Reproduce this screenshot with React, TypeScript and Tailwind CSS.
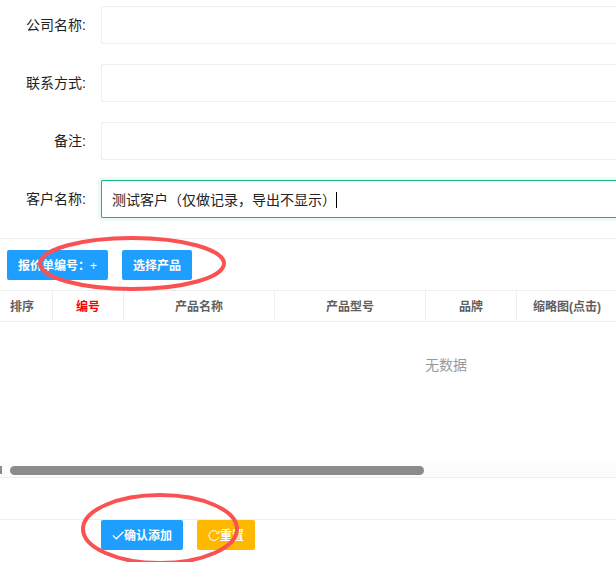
import React from "react";

type Field = { id: string; label: string; value?: string; active?: boolean };

const fields: Field[] = [
  { id: "company", label: "公司名称:" },
  { id: "contact", label: "联系方式:" },
  { id: "remark", label: "备注:" },
  { id: "customer", label: "客户名称:", value: "测试客户（仅做记录，导出不显示）", active: true },
];

function FormRow({ id, label, value, active }: Field) {
  return (
    <div className="flex h-[38px] items-center">
      <label htmlFor={id} className="w-[101px] shrink-0 pr-[15px] text-right text-sm leading-5">
        {label}
      </label>
      <div className="relative h-full min-w-0 flex-1">
        <input
          id={id}
          type="text"
          defaultValue={value}
          className={
            active
              ? "block h-full w-full rounded-l-xs border border-r-0 border-[#16b777] bg-white pl-[10px] text-sm caret-transparent shadow-[0_0_0_3px_rgba(22,183,119,0.08)] outline-none"
              : "block h-full w-full rounded-l-xs border border-r-0 border-[#eeeeee] bg-white pl-[10px] text-sm outline-none"
          }
        />
        {active && <span aria-hidden="true" className="absolute top-[12px] left-[235px] h-4 w-px bg-black" />}
      </div>
    </div>
  );
}

const button = "flex h-[30px] items-center rounded-xs px-[11px] pt-[2px] text-xs font-bold whitespace-nowrap text-white";

const cell = "h-[31px] border-r border-b border-[#eeeeee] px-0 pt-[2px] pb-0 text-center font-bold";

export default function App() {
  return (
    <main className="relative h-screen overflow-hidden bg-white font-['Liberation_Sans','Noto_Sans_CJK_SC',sans-serif] text-[#222222]">
      <form onSubmit={(e) => e.preventDefault()}>
        <div className="flex flex-col gap-5 pt-[6px] pb-5">
          {fields.map((f) => (
            <FormRow key={f.id} {...f} />
          ))}
        </div>

        <section className="border-y border-[#eeeeee]">
          <div className="flex gap-[14px] px-[7px] pt-[11px] pb-[10px]">
            <button type="button" className={`${button} bg-[#1e9fff]`}>
              报价单编号：<span className="font-normal">+</span>
            </button>
            <button type="button" className={`${button} bg-[#1e9fff]`}>
              选择产品
            </button>
          </div>

          <div className="overflow-hidden">
            <table className="w-[892px] table-fixed border-separate border-spacing-0 border-t border-[#eeeeee] text-xs text-[#5f5f5f]">
              <colgroup>
                <col className="w-[53px]" />
                <col className="w-[71px]" />
                <col className="w-[151px]" />
                <col className="w-[151px]" />
                <col className="w-[91px]" />
                <col className="w-[101px]" />
                <col />
              </colgroup>
              <thead>
                <tr>
                  <th className={`${cell} pr-2`}>排序</th>
                  <th className={`${cell} text-[#ff0000]`}>编号</th>
                  <th className={cell}>产品名称</th>
                  <th className={cell}>产品型号</th>
                  <th className={cell}>品牌</th>
                  <th className={cell}>缩略图(点击)</th>
                  <th className={cell} />
                </tr>
              </thead>
              <tbody>
                <tr>
                  <td colSpan={7} className="h-[141px] pt-[31px] pb-0 text-center align-top text-sm leading-6 text-[#999999]">
                    无数据
                  </td>
                </tr>
              </tbody>
            </table>
          </div>

          <div className="flex h-[14px] items-center gap-2 bg-[#fcfcfc]">
            <span className="h-2 w-[2px] bg-[#8b8b8b]" />
            <span className="h-[9px] w-[414px] rounded-full bg-[#8b8b8b]" />
          </div>
        </section>

        <div className="mt-[41px] flex gap-[14px] border-t border-[#eeeeee] pl-[101px]">
          <button type="submit" className={`${button} bg-[#1e9fff]`}>
            <svg width="12" height="12" viewBox="0 0 12 12" fill="none" stroke="currentColor" strokeWidth="1.2" aria-hidden="true">
              <path d="M.8 5.4 4.3 8.8 11.5 1.8" />
            </svg>
            确认添加
          </button>
          <button type="reset" className={`${button} bg-[#ffb800]`}>
            <svg width="12" height="12" viewBox="0 0 12 12" fill="none" stroke="currentColor" aria-hidden="true">
              <path d="M10.6 6.8A4.9 4.9 0 1 1 9.4 2.2M10.8.6V3.4H8" />
            </svg>
            重置
          </button>
        </div>
      </form>

      <svg
        aria-hidden="true"
        className="pointer-events-none absolute top-0 left-0"
        width="616"
        height="562"
        fill="none"
        stroke="#fa5252"
        strokeWidth="4"
      >
        <ellipse cx="132" cy="263.5" rx="92" ry="25.5" />
        <ellipse cx="160" cy="529" rx="77" ry="34" />
      </svg>
    </main>
  );
}
